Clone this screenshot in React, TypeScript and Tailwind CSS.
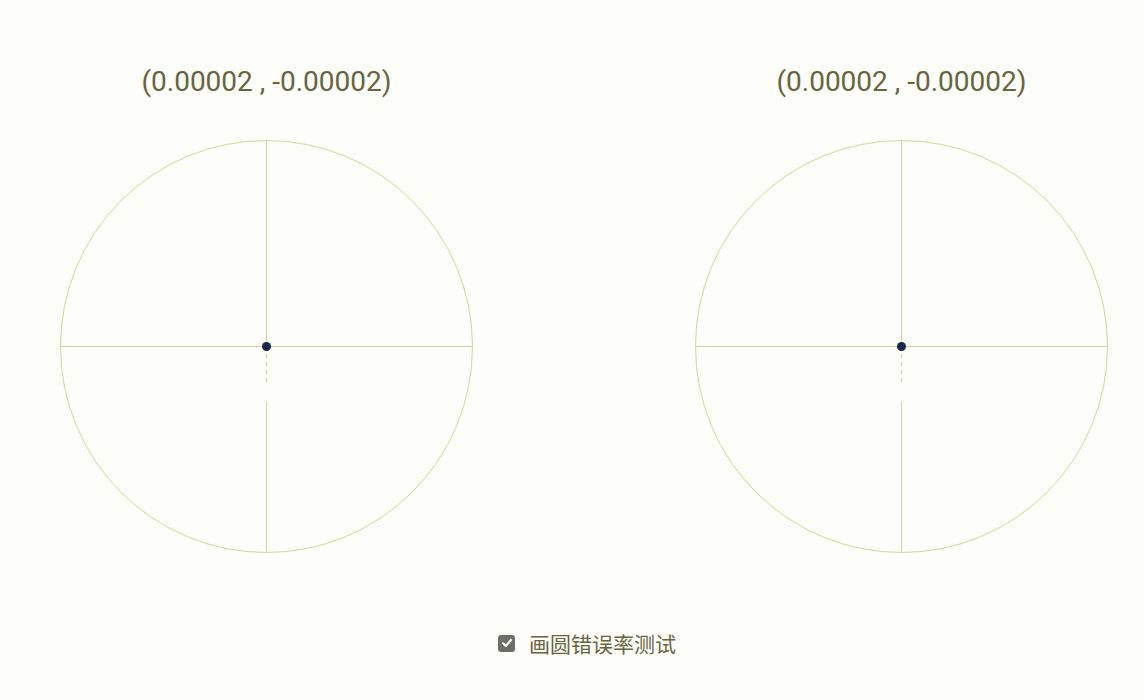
import { useState } from 'react';

const R = 206;

function Target({ x, y }: { x: number; y: number }) {
  return (
    <div className="flex flex-col items-center w-[413px]">
      <div className="h-[30px] mt-[67px] text-[28px] leading-[30px] text-[#67663f] font-['Roboto',sans-serif] whitespace-pre">
        ({x.toFixed(5)} , {y.toFixed(5)})
      </div>
      <svg width="413" height="413" viewBox="0 0 413 413" className="mt-[43px]">
        <circle cx="206.5" cy="206.5" r={R} fill="none" stroke="#d3d69c" strokeWidth="1" />
        <line x1="0.5" y1="206.5" x2="412.5" y2="206.5" stroke="#d3d69c" strokeWidth="1" />
        <line x1="206.5" y1="0.5" x2="206.5" y2="206.5" stroke="#d3d69c" strokeWidth="1" />
        <line x1="206.5" y1="206.5" x2="206.5" y2="245" stroke="#d3d69c" strokeWidth="1" strokeDasharray="4 4" />
        <line x1="206.5" y1="262" x2="206.5" y2="412.5" stroke="#d3d69c" strokeWidth="1" />
        <circle cx="206.5" cy="206.5" r="4.5" fill="#1c2848" />
      </svg>
    </div>
  );
}

export default function App() {
  const [checked, setChecked] = useState(true);

  return (
    <div className="w-[1144px] h-[700px] bg-[#fdfdf9] flex flex-col overflow-hidden">
      <div className="flex pl-[60px] gap-[222px]">
        <Target x={0.00002} y={-0.00002} />
        <Target x={0.00002} y={-0.00002} />
      </div>
      <label className="mt-[77px] pl-[30px] flex items-center justify-center gap-[14px] text-[21px] text-[#67663f] font-['Noto_Sans_CJK_SC',sans-serif]">
        <button
          onClick={() => setChecked(!checked)}
          className="w-[17px] h-[17px] rounded-[3px] bg-[#6f6f6a] flex items-center justify-center"
        >
          {checked && (
            <svg width="12" height="12" viewBox="0 0 12 12">
              <path d="M2 6.3 L4.8 9 L10 3" fill="none" stroke="#fff" strokeWidth="2.2" strokeLinecap="round" strokeLinejoin="round" />
            </svg>
          )}
        </button>
        <span className="leading-[26px]">画圆错误率测试</span>
      </label>
    </div>
  );
}
